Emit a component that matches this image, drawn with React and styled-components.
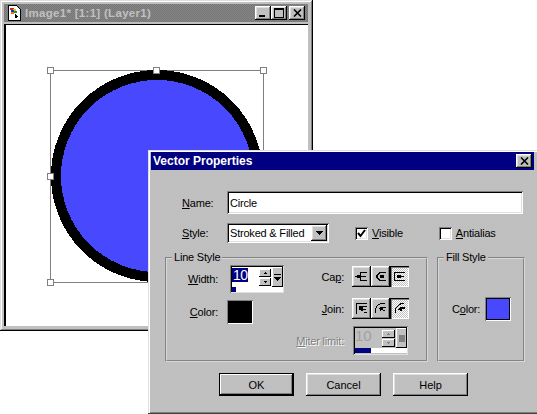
import styled, { createGlobalStyle } from "styled-components";

const raised = `inset -1px -1px #000, inset 1px 1px #fff, inset -2px -2px #808080, inset 2px 2px #dfdfdf`;
const sunken = `inset 1px 1px #808080, inset -1px -1px #fff, inset 2px 2px #000, inset -2px -2px #dfdfdf`;
const dither = `
  background-color: #c0c0c0;
  background-image: repeating-conic-gradient(#c2c2c2 0 25%, #bdbdbd 0 50%);
  background-size: 2px 2px;
`;

const GlobalStyle = createGlobalStyle`
  html, body {
    margin: 0;
    padding: 0;
    background: #fff;
    overflow: hidden;
  }
  * { box-sizing: border-box; }
`;

const Desktop = styled.div`
  position: relative;
  width: 537px;
  height: 414px;
  overflow: hidden;
  background: #fff;
  font-family: "Liberation Sans", Arial, sans-serif;
  font-size: 11px;
  letter-spacing: -0.2px;
  color: #000;
`;

const ImageWindow = styled.div`
  position: absolute;
  left: 0;
  top: 0;
  width: 313px;
  height: 331px;
  padding: 4px 5px 5px 4px;
  background: #c0c0c0;
  box-shadow: inset -1px -1px #000, inset 1px 1px #dfdfdf, inset -2px -2px #808080, inset 2px 2px #fff;
  display: flex;
  flex-direction: column;
`;

const ImageTitle = styled.div`
  height: 18px;
  display: flex;
  align-items: center;
  padding: 0 3px 0 4px;
  background-color: #808080;
  background-image: repeating-conic-gradient(#868686 0 25%, #767676 0 50%);
  background-size: 2px 2px;
  color: #c0c0c0;
  font-weight: 700;
  font-size: 11.5px;
  letter-spacing: 0.3px;
`;

const TitleText = styled.span`
  margin-left: 4px;
  flex: 1;
`;

const TitleButton = styled.button`
  width: 16px;
  height: 14px;
  padding: 0;
  margin-left: ${(p) => p.$gap || 0}px;
  border: none;
  background: #c0c0c0;
  box-shadow: ${raised};
  display: flex;
  align-items: center;
  justify-content: center;
`;

const Canvas = styled.div`
  position: relative;
  flex: 1;
  margin-top: 2px;
  background: #fff;
  border-top: 1px solid #000;
  border-left: 2px solid #000;
`;

const Selection = styled.div`
  position: absolute;
  left: 44px;
  top: 45px;
  width: 214px;
  height: 213px;
  border: 1px solid #808080;
`;

const CircleArt = styled.svg`
  position: absolute;
  left: -1px;
  top: -1px;
  display: block;
`;

const Handle = styled.span`
  position: absolute;
  left: ${(p) => p.$x}px;
  top: ${(p) => p.$y}px;
  width: 7px;
  height: 7px;
  background: #fff;
  border: 1px solid #808080;
`;

const Dialog = styled.div`
  position: absolute;
  left: 148px;
  top: 150px;
  width: 389px;
  height: 264px;
  padding: 2px 3px;
  ${dither}
  box-shadow: inset 0 -1px #404040, inset 1px 1px #dfdfdf, inset 2px 2px #fff, inset 0 -2px #808080;
`;

const DialogTitle = styled.div`
  height: 18px;
  display: flex;
  align-items: center;
  justify-content: space-between;
  padding: 0 2px 0 2px;
  background: #000080;
  color: #fff;
  font-weight: 700;
  font-size: 12px;
  letter-spacing: 0;
`;

const TopRow = styled.div`
  display: flex;
  align-items: center;
  margin-top: ${(p) => p.$top}px;
`;

const Label = styled.label`
  width: ${(p) => p.$width}px;
  margin-right: ${(p) => p.$gap}px;
  padding-left: ${(p) => p.$inset || 0}px;
  flex: none;
  text-align: ${(p) => (p.$inset ? "left" : "right")};
  white-space: nowrap;
  color: #000;
  u { text-decoration: underline; text-underline-offset: 1px; }
`;

const DisabledLabel = styled(Label)`
  color: #808080;
  text-shadow: 1px 1px #fff;
`;

const TextInput = styled.div`
  width: 296px;
  height: 23px;
  display: flex;
  align-items: center;
  padding: 0 3px;
  background: #fff;
  box-shadow: ${sunken};
`;

const Select = styled.div`
  width: 102px;
  height: 20px;
  display: flex;
  align-items: center;
  justify-content: space-between;
  padding: 2px 2px 2px 3px;
  white-space: nowrap;
  background: #fff;
  box-shadow: ${sunken};
`;

const SelectArrow = styled.span`
  width: 16px;
  height: 16px;
  display: flex;
  align-items: center;
  justify-content: center;
  background: #c0c0c0;
  box-shadow: ${raised};
`;

const Check = styled.span`
  width: 13px;
  height: 13px;
  flex: none;
  margin-left: ${(p) => p.$left}px;
  margin-right: 4px;
  display: flex;
  align-items: center;
  justify-content: center;
  background: #fff;
  box-shadow: ${sunken};
`;

const CheckText = styled.span`
  u { text-decoration: underline; text-underline-offset: 1px; }
`;

const Groups = styled.div`
  display: flex;
  margin: 8px 0 0 14px;
  gap: 9px;
`;

const Group = styled.fieldset`
  margin: 0;
  width: ${(p) => p.$width}px;
  height: 111px;
  min-width: 0;
  padding: 1px 0 0 0;
  border: 2px groove #d8d8d8;
  display: flex;
`;

const Legend = styled.legend`
  margin-left: 5px;
  padding: 0 2px;
  line-height: 13px;
`;

const LineGroupBody = styled.div`
  display: flex;
`;

const LeftColumn = styled.div`
  width: 126px;
  display: flex;
  flex-direction: column;
  gap: 7px;
`;

const RightColumn = styled.div`
  display: flex;
  flex-direction: column;
  padding-top: 1px;
`;

const FieldRow = styled.div`
  display: flex;
  align-items: center;
  margin-top: ${(p) => p.$top || 0}px;
`;

const Spin = styled.div`
  width: ${(p) => (p.$small ? 55 : 54)}px;
  height: ${(p) => (p.$small ? 29 : 28)}px;
  padding: 2px 1px 0 2px;
  background: ${(p) => (p.$small ? "#c0c0c0" : "#fff")};
  box-shadow: inset 1px 1px #808080, inset -1px -1px #dfdfdf, inset 2px 2px #000;
  display: flex;
  flex-direction: column;
`;

const SpinTop = styled.div`
  display: flex;
  height: 20px;
  align-items: flex-start;
`;

const SpinField = styled.span`
  width: 27px;
  flex: none;
  padding: 1px 0 0 0;
  font-size: 15px;
  line-height: 14px;
  letter-spacing: 0;
  color: #a0a0a0;
`;

const SpinSelected = styled.span`
  display: inline-block;
  height: 14px;
  padding: 0 0 0 1px;
  font-size: 14px;
  letter-spacing: -0.5px;
  color: #fff;
  background: #000080;
`;

const SpinArrows = styled.div`
  width: 13px;
  display: flex;
  flex-direction: column;
  gap: 0;
  padding-top: 2px;
`;

const SpinArrow = styled.span`
  height: 8px;
  margin-bottom: 1px;
  background: #c0c0c0;
  box-shadow: inset -1px -1px #000, inset 1px 1px #fff;
  display: flex;
  align-items: center;
  justify-content: center;
`;

const SpinDrop = styled.span`
  width: 11px;
  height: 20px;
  margin-left: 1px;
  background: #c0c0c0;
  box-shadow: inset -1px -1px #000, inset 1px 1px #fff;
  display: flex;
  align-items: center;
  justify-content: center;
`;

const Slider = styled.div`
  height: 5px;
  background: #fff;
`;

const SliderFill = styled.div`
  height: 100%;
  background: #000080;
`;

const Swatch = styled.span`
  display: block;
  width: ${(p) => p.$size[0]}px;
  height: ${(p) => p.$size[1]}px;
  background: ${(p) => p.$color};
  box-shadow: inset 1px 1px #808080, inset -1px -1px #fff, inset 2px 2px #000, inset -2px -2px #000;
`;

const ToolGroup = styled.div`
  display: flex;
`;

const ToolButton = styled.span`
  width: 19px;
  height: 21px;
  display: flex;
  align-items: center;
  justify-content: center;
  background-color: #c0c0c0;
  box-shadow: ${(p) => (p.$on ? "inset 1px 1px #000, inset 2px 2px #808080, inset -1px -1px #fff" : raised)};
  ${(p) =>
    p.$on
      ? `background-image: repeating-conic-gradient(#fff 0 25%, #c0c0c0 0 50%); background-size: 2px 2px;`
      : ""}
`;

const FillBody = styled.div`
  display: flex;
  align-items: center;
  align-self: flex-start;
  padding: 32px 0 0 13px;
`;

const Actions = styled.div`
  display: flex;
  gap: 12px;
  margin: 11px 0 0 68px;
`;

const PushButton = styled.button`
  width: 75px;
  height: 23px;
  padding: 0;
  border: none;
  font-family: inherit;
  font-size: 11px;
  color: #000;
  ${dither}
  box-shadow: ${(p) =>
    p.$default
      ? "inset 0 0 0 1px #000, inset -2px -2px #000, inset 2px 2px #fff, inset -3px -3px #808080"
      : raised};
`;

const Arrow = ({ down = true, color = "#000", w = 7 }) => (
  <svg width={w} height={4} viewBox="0 0 7 4" shapeRendering="crispEdges">
    <path d={down ? "M0 0h7L3.5 4z" : "M0 4h7L3.5 0z"} fill={color} />
  </svg>
);

const DropIcon = () => (
  <svg width="7" height="7" viewBox="0 0 7 7" shapeRendering="crispEdges">
    <path d="M0 0h7v1h-7zM0 3h7v1h-1v1h-1v1h-1v1h-1v-1h-1v-1h-1v-1h-1z" fill="#000" />
  </svg>
);

const DocIcon = () => (
  <svg width="13" height="16" viewBox="0 0 13 16" shapeRendering="crispEdges">
    <path d="M0.5 0.5h8l4 4v11h-12z" fill="#fff" stroke="#000" />
    <path d="M2 3h4v2h-4z" fill="#d82020" />
    <path d="M5 4h3v2h-3z" fill="#e8c000" />
    <path d="M3 5h3v2h-3z" fill="#2030d0" />
    <path d="M6 6h3v2h-3z" fill="#10a030" />
    <path d="M3 7h3v2h-3z" fill="#e07818" />
    <path d="M7 9h1v4h-1zM8 10h1v3h-1zM9 11h1v1h-1z" fill="#000" />
  </svg>
);

const CapIcon = ({ kind }) => (
  <svg width="13" height="12" viewBox="0 0 13 12" shapeRendering="crispEdges">
    {kind === "butt" && (
      <path d="M5 1h7v1h-6v3h5v1h-5v3h6v1h-7zM0 5h5v1h-5zM2 4h3v3h-3z" fill="#000" />
    )}
    {kind === "round" && (
      <path d="M5 1h7v1h-6v1h-1v1h-1v3h1v1h1v1h6v1h-7v-1h-1v-1h-1v-1h-1v-3h1v-1h1v-1h1zM6 4h4v3h-4z" fill="#000" />
    )}
    {kind === "square" && (
      <path d="M1 1h11v1h-10v7h10v1h-11zM4 4h4v1h3v1h-3v1h-4z" fill="#000" />
    )}
  </svg>
);

const JoinIcon = ({ kind }) => (
  <svg width="13" height="13" viewBox="0 0 13 13" shapeRendering="crispEdges">
    {kind === "miter" && (
      <path d="M1 1h11v1h-10v10h-1zM4 4h8v1h-4v2h3v1h-3v1h-2v-1h-2zM9 10h3v1h-3z" fill="#000" />
    )}
    {kind === "round" && (
      <path d="M6 1h5v1h-5v1h-2v1h-1v2h-1v5h-1v-5h1v-2h1v-1h1v-1h2zM6 5h6v1h-3v2h2v1h-2v-1h-2v1h-1v-2h-1v-1h1z" fill="#000" />
    )}
    {kind === "bevel" && (
      <path d="M7 1h4v1h-3v1h-2v1h-1v1h-1v1h-1v5h-1v-5h1v-1h1v-1h1v-1h1v-1h1zM6 5h6v2h-3v2h-2v-1h-2v-1h1v-1h1z" fill="#000" />
    )}
  </svg>
);

const handles = [
  [-4, -4],
  [102, -4],
  [209, -4],
  [-4, 102],
  [-4, 208],
  [209, 208],
];

export default function App() {
  return (
    <Desktop>
      <GlobalStyle />

      <ImageWindow>
        <ImageTitle>
          <DocIcon />
          <TitleText>Image1* [1:1] (Layer1)</TitleText>
          <TitleButton>
            <svg width="8" height="8" viewBox="0 0 8 8" shapeRendering="crispEdges">
              <path d="M0 6h6v2h-6z" fill="#000" />
            </svg>
          </TitleButton>
          <TitleButton>
            <svg width="10" height="10" viewBox="0 0 10 10" shapeRendering="crispEdges">
              <path d="M0 0h10v10h-10zM1 2v7h8v-7z" fill="#000" fillRule="evenodd" />
            </svg>
          </TitleButton>
          <TitleButton $gap={2}>
            <svg width="9" height="8" viewBox="0 0 9 8">
              <path d="M1 0.5l7 7M8 0.5l-7 7" stroke="#000" strokeWidth="1.6" />
            </svg>
          </TitleButton>
        </ImageTitle>
        <Canvas>
          <Selection>
            <CircleArt width="214" height="213" viewBox="0 0 214 213" shapeRendering="crispEdges">
              <circle cx="107" cy="106" r="101" fill="#4848ff" stroke="#000" strokeWidth="10" />
            </CircleArt>
            {handles.map(([x, y]) => (
              <Handle key={`${x}-${y}`} $x={x} $y={y} />
            ))}
          </Selection>
        </Canvas>
      </ImageWindow>

      <Dialog>
        <DialogTitle>
          Vector Properties
          <TitleButton>
            <svg width="9" height="8" viewBox="0 0 9 8">
              <path d="M1 0.5l7 7M8 0.5l-7 7" stroke="#000" strokeWidth="1.6" />
            </svg>
          </TitleButton>
        </DialogTitle>

        <TopRow $top={21}>
          <Label $width={61} $gap={15} $inset={31}>
            <u>N</u>ame:
          </Label>
          <TextInput>Circle</TextInput>
        </TopRow>

        <TopRow $top={9}>
          <Label $width={61} $gap={15} $inset={31}>
            <u>S</u>tyle:
          </Label>
          <Select>
            Stroked &amp; Filled
            <SelectArrow>
              <Arrow />
            </SelectArrow>
          </Select>
          <Check $left={26}>
            <svg width="9" height="9" viewBox="0 0 9 9">
              <path d="M1 4l2.5 3L8 1" fill="none" stroke="#000" strokeWidth="2" />
            </svg>
          </Check>
          <CheckText>
            <u>V</u>isible
          </CheckText>
          <Check $left={36} />
          <CheckText>
            <u>A</u>ntialias
          </CheckText>
        </TopRow>

        <Groups>
          <Group $width={263}>
            <Legend>Line Style</Legend>
            <LineGroupBody>
              <LeftColumn>
                <FieldRow>
                  <Label $width={51} $gap={12}>
                    <u>W</u>idth:
                  </Label>
                  <Spin>
                    <SpinTop>
                      <SpinField>
                        <SpinSelected>10</SpinSelected>
                      </SpinField>
                      <SpinArrows>
                        <SpinArrow>
                          <Arrow down={false} w={5} />
                        </SpinArrow>
                        <SpinArrow>
                          <Arrow w={5} />
                        </SpinArrow>
                      </SpinArrows>
                      <SpinDrop>
                        <DropIcon />
                      </SpinDrop>
                    </SpinTop>
                    <Slider>
                      <SliderFill style={{ width: "8%" }} />
                    </Slider>
                  </Spin>
                </FieldRow>
                <FieldRow>
                  <Label $width={51} $gap={9}>
                    <u>C</u>olor:
                  </Label>
                  <Swatch $color="#000" $size={[26, 24]} />
                </FieldRow>
              </LeftColumn>
              <RightColumn>
                <FieldRow>
                  <Label $width={51} $gap={8}>
                    Ca<u>p</u>:
                  </Label>
                  <ToolGroup>
                    <ToolButton>
                      <CapIcon kind="butt" />
                    </ToolButton>
                    <ToolButton>
                      <CapIcon kind="round" />
                    </ToolButton>
                    <ToolButton $on>
                      <CapIcon kind="square" />
                    </ToolButton>
                  </ToolGroup>
                </FieldRow>
                <FieldRow $top={11}>
                  <Label $width={51} $gap={8}>
                    <u>J</u>oin:
                  </Label>
                  <ToolGroup>
                    <ToolButton>
                      <JoinIcon kind="miter" />
                    </ToolButton>
                    <ToolButton>
                      <JoinIcon kind="round" />
                    </ToolButton>
                    <ToolButton $on>
                      <JoinIcon kind="bevel" />
                    </ToolButton>
                  </ToolGroup>
                </FieldRow>
                <FieldRow $top={7}>
                  <DisabledLabel $width={51} $gap={9}>
                    <u>M</u>iter limit:
                  </DisabledLabel>
                  <Spin $small>
                    <SpinTop>
                      <SpinField>10</SpinField>
                      <SpinArrows>
                        <SpinArrow>
                          <Arrow down={false} color="#808080" w={5} />
                        </SpinArrow>
                        <SpinArrow>
                          <Arrow color="#808080" w={5} />
                        </SpinArrow>
                      </SpinArrows>
                      <SpinDrop>
                        <svg width="6" height="7" viewBox="0 0 6 7" shapeRendering="crispEdges">
                          <path d="M0 0h6v7h-6z" fill="#808080" />
                        </svg>
                      </SpinDrop>
                    </SpinTop>
                    <Slider>
                      <SliderFill style={{ width: "30%" }} />
                    </Slider>
                  </Spin>
                </FieldRow>
              </RightColumn>
            </LineGroupBody>
          </Group>
          <Group $width={88}>
            <Legend>Fill Style</Legend>
            <FillBody>
              <Label $width={28} $gap={5}>
                C<u>o</u>lor:
              </Label>
              <Swatch $color="#4848ff" $size={[26, 24]} />
            </FillBody>
          </Group>
        </Groups>

        <Actions>
          <PushButton $default>OK</PushButton>
          <PushButton>Cancel</PushButton>
          <PushButton>Help</PushButton>
        </Actions>
      </Dialog>
    </Desktop>
  );
}
